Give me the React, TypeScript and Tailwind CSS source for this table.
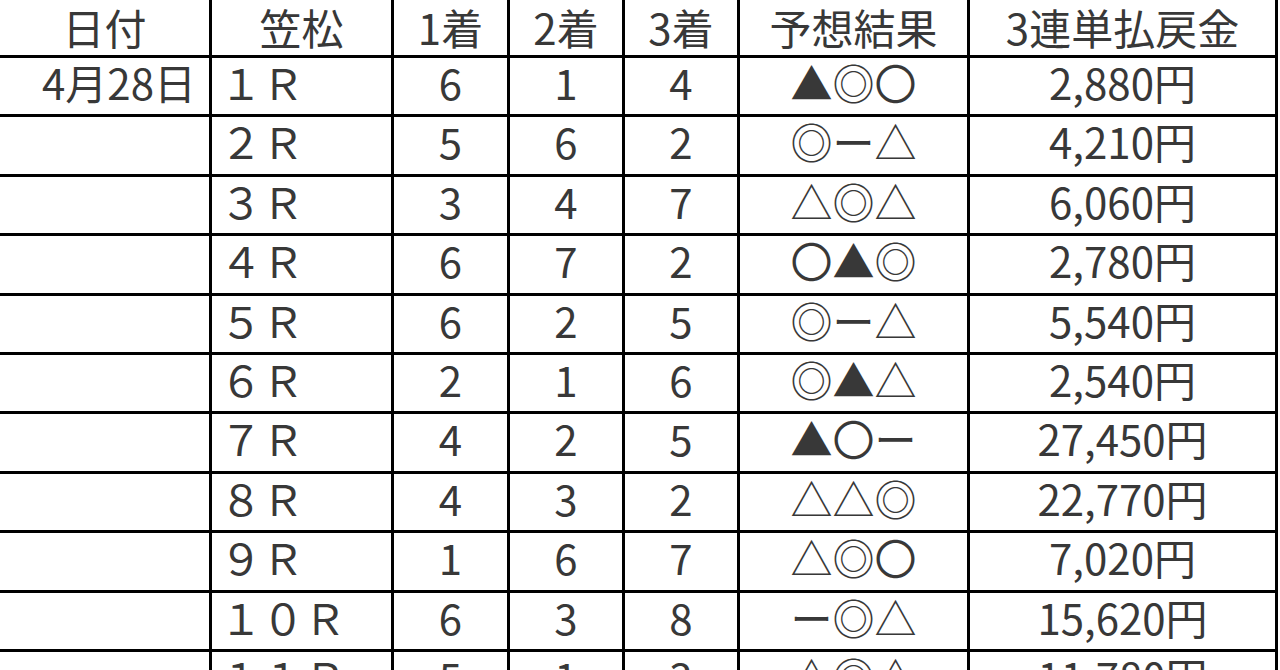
import React from "react";

const rows: [string, string, string, string, string, string, string][] = [
  ["4月28日", "１Ｒ", "6", "1", "4", "▲◎〇", "2,880円"],
  ["", "２Ｒ", "5", "6", "2", "◎ー△", "4,210円"],
  ["", "３Ｒ", "3", "4", "7", "△◎△", "6,060円"],
  ["", "４Ｒ", "6", "7", "2", "〇▲◎", "2,780円"],
  ["", "５Ｒ", "6", "2", "5", "◎ー△", "5,540円"],
  ["", "６Ｒ", "2", "1", "6", "◎▲△", "2,540円"],
  ["", "７Ｒ", "4", "2", "5", "▲〇ー", "27,450円"],
  ["", "８Ｒ", "4", "3", "2", "△△◎", "22,770円"],
  ["", "９Ｒ", "1", "6", "7", "△◎〇", "7,020円"],
  ["", "１０Ｒ", "6", "3", "8", "ー◎△", "15,620円"],
  ["", "１１Ｒ", "5", "1", "3", "△◎△", "11,780円"],
];

const headers = ["日付", "笠松", "1着", "2着", "3着", "予想結果", "3連単払戻金"];

const cell = "bg-white flex items-center overflow-visible pb-[8px] leading-[1.15]";
const head = "bg-white flex items-center justify-center pb-[2px] leading-[1]";

export default function App() {
  return (
    <div
      className="w-[1280px] h-[670px] overflow-hidden bg-white text-[#383838]"
      style={{ fontFamily: '"Noto Sans CJK JP", "Noto Sans", sans-serif' }}
    >
      <div className="w-[1278px] border-r-[3px] border-black bg-black">
        <div className="grid grid-cols-[209px_179px_113px_112px_112px_227px_305px] grid-rows-[55px_repeat(11,56.4px)] gap-[3px] bg-black text-[42px]">
          {headers.map((h, i) => (
            <div key={"h" + i} className={head}>
              {h}
            </div>
          ))}
          {rows.map((r, ri) => (
            <React.Fragment key={ri}>
              <div className={cell + " justify-end pr-[13px]"}>{r[0]}</div>
              <div className={cell + " justify-start pl-[8px]"}>{r[1]}</div>
              <div className={cell + " justify-center"}>{r[2]}</div>
              <div className={cell + " justify-center"}>{r[3]}</div>
              <div className={cell + " justify-center"}>{r[4]}</div>
              <div className={cell + " justify-center"}>{r[5]}</div>
              <div className={cell + " justify-center"}>{r[6]}</div>
            </React.Fragment>
          ))}
        </div>
      </div>
    </div>
  );
}
